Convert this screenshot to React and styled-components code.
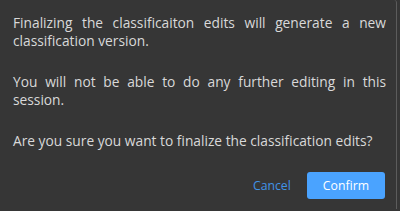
import React from 'react'
import styled, { createGlobalStyle } from 'styled-components'

const Global = createGlobalStyle`
  html, body {
    margin: 0;
    padding: 0;
    background: #363636;
  }
  body {
    font-family: "Open Sans", "Noto Sans", sans-serif;
  }
`

const Dialog = styled.div`
  box-sizing: border-box;
  width: 397px;
  height: 209px;
  background: #363636;
  border-right: 1px solid #5c5c5c;
  border-top-right-radius: 3px;
  padding: 14px 10px 10px 13px;
  display: flex;
  flex-direction: column;
`

const Body = styled.div`
  flex: 1;
  color: #d9d9d9;
  font-size: 13.75px;
  line-height: 18px;
`

const Para = styled.p`
  margin: 0 0 23px 0;
  text-align: justify;
  &:last-child {
    margin-bottom: 0;
  }
`

const Actions = styled.div`
  display: flex;
  justify-content: flex-end;
  align-items: center;
  gap: 16px;
  padding-right: 1px;
`

const Button = styled.button`
  font-family: "Open Sans", "Noto Sans", sans-serif;
  font-size: 12.25px;
  border: none;
  border-radius: 3px;
  height: 27px;
  padding: 0 ${p => (p.$primary ? '16px' : '0')};
  cursor: pointer;
  background: ${p => (p.$primary ? '#4aa3ff' : 'transparent')};
  color: ${p => (p.$primary ? '#ffffff' : '#4193e6')};
`

export default function App() {
  return (
    <>
      <Global />
      <Dialog>
        <Body>
          <Para>Finalizing the classificaiton edits will generate a new classification version.</Para>
          <Para>You will not be able to do any further editing in this session.</Para>
          <Para>Are you sure you want to finalize the classification edits?</Para>
        </Body>
        <Actions>
          <Button>Cancel</Button>
          <Button $primary>Confirm</Button>
        </Actions>
      </Dialog>
    </>
  )
}
